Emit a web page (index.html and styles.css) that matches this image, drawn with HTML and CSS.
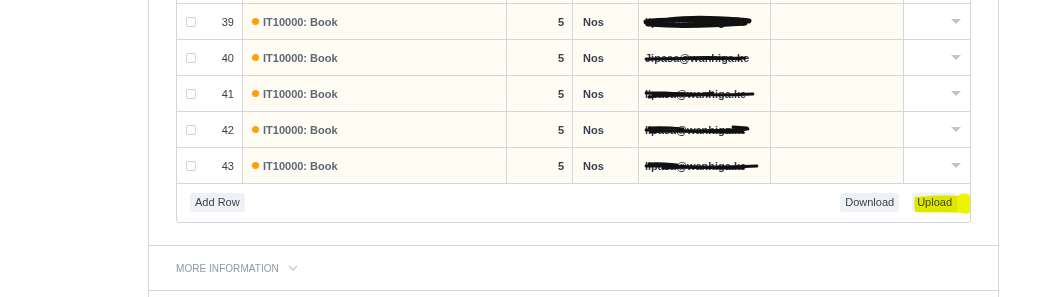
FILE: index.html
```html
<!DOCTYPE html>
<html>
<head>
<meta charset="utf-8">
<link rel="stylesheet" href="styles.css">
</head>
<body>
<div class="form">
  <div class="section grid-section">
    <div class="grid">
      <div class="row">
        <div class="cell idx"></div>
        <div class="cell item ed"></div>
        <div class="cell qty ed"></div>
        <div class="cell uom ed"></div>
        <div class="cell email ed"></div>
        <div class="cell ed"></div>
        <div class="cell act"></div>
      </div>
      <div class="row">
        <div class="cell idx"><span class="check"></span><span>39</span></div>
        <div class="cell item ed"><span class="dot"></span><b>IT10000: Book</b></div>
        <div class="cell qty ed">5</div>
        <div class="cell uom ed">Nos</div>
        <div class="cell email ed"><b>lipasa@wanhiga.ke</b>
          <svg class="scribble heavy" viewBox="0 0 120 16" width="120" height="16"><path d="M3 8 C 20 5, 42 6, 60 7 S 92 4, 106 7" /><path d="M5 10 C 30 12, 62 12, 102 9" /><path d="M26 6 C 48 3, 72 4, 96 6" /><path d="M60 9 C 75 10, 90 10, 100 8" /></svg></div>
        <div class="cell ed"></div>
        <div class="cell act"><span class="caret"></span></div>
      </div>
      <div class="row">
        <div class="cell idx"><span class="check"></span><span>40</span></div>
        <div class="cell item ed"><span class="dot"></span><b>IT10000: Book</b></div>
        <div class="cell qty ed">5</div>
        <div class="cell uom ed">Nos</div>
        <div class="cell email ed"><b>Jipasa@wanhiga.ke</b>
          <svg class="scribble" viewBox="0 0 120 16" width="120" height="16"><path d="M3 9 C 30 8, 60 9, 102 8" /><path d="M42 8 C 60 7, 80 7, 96 9" /></svg></div>
        <div class="cell ed"></div>
        <div class="cell act"><span class="caret"></span></div>
      </div>
      <div class="row">
        <div class="cell idx"><span class="check"></span><span>41</span></div>
        <div class="cell item ed"><span class="dot"></span><b>IT10000: Book</b></div>
        <div class="cell qty ed">5</div>
        <div class="cell uom ed">Nos</div>
        <div class="cell email ed"><b>lipasa@wanhiga.ke</b>
          <svg class="scribble" viewBox="0 0 120 16" width="120" height="16"><path d="M3 7 L 22 7 C 44 9, 66 10, 110 8" /><path d="M6 11 C 24 8, 44 11, 70 7" /><path d="M10 9 C 30 6, 50 8, 66 9" /></svg></div>
        <div class="cell ed"></div>
        <div class="cell act"><span class="caret"></span></div>
      </div>
      <div class="row">
        <div class="cell idx"><span class="check"></span><span>42</span></div>
        <div class="cell item ed"><span class="dot"></span><b>IT10000: Book</b></div>
        <div class="cell qty ed">5</div>
        <div class="cell uom ed">Nos</div>
        <div class="cell email ed"><b>lipasa@wanhiga.ke</b>
          <svg class="scribble" viewBox="0 0 120 16" width="120" height="16"><path d="M3 8 C 26 9, 60 10, 105 7" /><path d="M8 10 C 30 7, 70 11, 100 10" /><path d="M6 6 C 20 5, 30 6, 40 7" /><path d="M90 5 L 104 6" /></svg></div>
        <div class="cell ed"></div>
        <div class="cell act"><span class="caret"></span></div>
      </div>
      <div class="row">
        <div class="cell idx"><span class="check"></span><span>43</span></div>
        <div class="cell item ed"><span class="dot"></span><b>IT10000: Book</b></div>
        <div class="cell qty ed">5</div>
        <div class="cell uom ed">Nos</div>
        <div class="cell email ed"><b>lipasa@wanhiga.ke</b>
          <svg class="scribble" viewBox="0 0 120 16" width="120" height="16"><path d="M3 8 L 30 8 C 60 10, 90 9, 114 8" /><path d="M20 10 C 50 8, 80 11, 100 10" /><path d="M6 6 C 16 5, 24 6, 34 7" /></svg></div>
        <div class="cell ed"></div>
        <div class="cell act"><span class="caret"></span></div>
      </div>
      <div class="grid-footer">
        <button class="btn">Add Row</button>
        <div class="footer-right">
          <button class="btn">Download</button>
          <button class="btn upload">Upload<svg class="highlight" viewBox="0 0 58 21" width="58" height="21"><path d="M2 4 C 14 3, 30 2, 44 3 L 48 1 C 52 0, 56 1, 57 3 L 57 19 C 56 21, 52 21, 49 20 C 36 19, 14 20, 3 19 C 1 18, 1 6, 2 4 Z"/></svg></button>
        </div>
      </div>
    </div>
  </div>
  <div class="section more-info">
    <span class="more-label">More Information</span>
    <svg class="chev" viewBox="0 0 10 6" width="10" height="6"><path d="M1 1 L5 5 L9 1"/></svg>
  </div>
  <div class="section tail"></div>
</div>
</body>
</html>
```

FILE: styles.css
```css
* { box-sizing: border-box; }

html, body {
  margin: 0;
  background: #fff;
}

body {
  font-family: "Liberation Sans", Arial, sans-serif;
  font-size: 11px;
  color: #36414c;
  overflow: hidden;
}

.form {
  margin-left: 148px;
  width: 851px;
  border-left: 1px solid #d1d8dd;
  border-right: 1px solid #d1d8dd;
  min-height: 400px;
}

.section {
  border-bottom: 1px solid #d1d8dd;
}

.grid-section {
  padding: 0 27px 22px 27px;
}

.grid {
  margin-top: -33px;
  width: 795px;
  border: 1px solid #d1d8dd;
  border-radius: 0 0 3px 3px;
}

.row {
  display: grid;
  grid-template-columns: 66px 264px 66px 66px 132px 133px 66px;
  height: 36px;
  border-bottom: 1px solid #d1d8dd;
}

.cell {
  display: flex;
  align-items: center;
  border-right: 1px solid #d1d8dd;
  position: relative;
  white-space: nowrap;
}

.cell:last-child {
  border-right: none;
}

.ed {
  background: #fffcf4;
}

.idx {
  justify-content: space-between;
  padding: 0 8px 0 9px;
  color: #36414c;
}

.check {
  width: 10px;
  height: 10px;
  border: 1px solid #cbd3da;
  border-radius: 2px;
  background: #fff;
}

.item {
  padding-left: 9px;
  gap: 4px;
  color: #5d6873;
}

.dot {
  width: 7px;
  height: 7px;
  border-radius: 50%;
  background: #ffa00a;
}

.qty {
  justify-content: flex-end;
  padding-right: 8px;
  font-weight: bold;
}

.uom {
  padding-left: 10px;
  font-weight: bold;
}

.email {
  padding-left: 6px;
}

.email b {
  color: #2e3a46;
}

.scribble {
  position: absolute;
  left: 4px;
  top: 50%;
  margin-top: -8px;
  fill: none;
  stroke: #111;
  stroke-width: 2.8;
  stroke-linecap: round;
  stroke-linejoin: round;
}

.scribble.heavy {
  stroke-width: 5;
}

.act {
  justify-content: flex-end;
  padding-right: 9px;
}

.caret {
  width: 0;
  height: 0;
  border-left: 5px solid transparent;
  border-right: 5px solid transparent;
  border-top: 5px solid #bfc5cb;
}

.grid-footer {
  display: flex;
  justify-content: space-between;
  align-items: flex-start;
  padding: 9px 13px 10px 13px;
  height: 38px;
}

.footer-right {
  display: flex;
  gap: 13px;
}

.btn {
  font-family: inherit;
  font-size: 11px;
  line-height: 19px;
  height: 19px;
  padding: 0 5px;
  border: none;
  border-radius: 3px;
  background: #eef2f6;
  color: #3b4250;
  cursor: pointer;
}

.upload {
  position: relative;
  color: #3c4a18;
}

.highlight {
  position: absolute;
  left: 1px;
  top: 0;
  fill: #eef400;
  mix-blend-mode: multiply;
}

.more-info {
  height: 45px;
  padding-left: 27px;
  display: flex;
  align-items: center;
  gap: 9px;
}

.more-label {
  font-size: 10px;
  text-transform: uppercase;
  color: #8d99a6;
  letter-spacing: 0.05px;
}

.chev {
  fill: none;
  stroke: #c2c9d0;
  stroke-width: 1.3;
}

.tail {
  height: 60px;
  border-bottom: none;
}
```
